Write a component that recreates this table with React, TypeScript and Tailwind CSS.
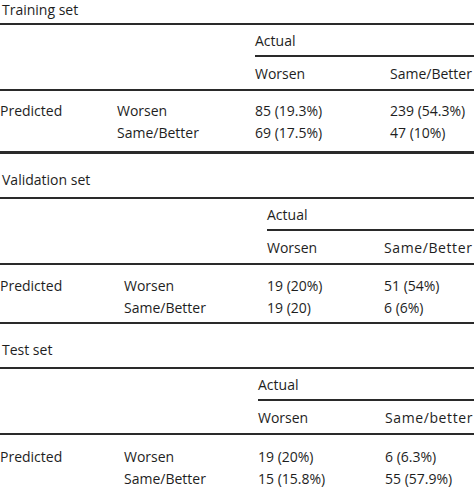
import type { ReactElement } from 'react';

type Section = {
  title: string;
  cols: string;
  titleClass: string;
  dataClass: string;
  bottomClass: string;
  right: string;
  rightClass: string;
  rows: [string, string, string, string][];
};

const sections: Section[] = [
  {
    title: 'Training set',
    cols: 'grid-cols-[117px_138px_135px_1fr]',
    titleClass: 'pt-0 pb-[3px]',
    dataClass: 'pt-[8px] pb-[8px]',
    bottomClass: 'border-b-[3px]',
    right: 'Same/Better',
    rightClass: 'tracking-normal',
    rows: [
      ['Predicted', 'Worsen', '85 (19.3%)', '239 (54.3%)'],
      ['', 'Same/Better', '69 (17.5%)', '47 (10%)'],
    ],
  },
  {
    title: 'Validation set',
    cols: 'grid-cols-[124px_143px_117px_1fr]',
    titleClass: 'pt-[16px] pb-[7px]',
    dataClass: 'pt-[9px] pb-[4px]',
    bottomClass: 'border-b-2',
    right: 'Same/Better',
    rightClass: 'tracking-[0.6px]',
    rows: [
      ['Predicted', 'Worsen', '19 (20%)', '51 (54%)'],
      ['', 'Same/Better', '19 (20)', '6 (6%)'],
    ],
  },
  {
    title: 'Test set',
    cols: 'grid-cols-[124px_134px_127px_1fr]',
    titleClass: 'pt-[16px] pb-[7px]',
    dataClass: 'pt-[10px] pb-[4px]',
    bottomClass: 'border-b-0',
    right: 'Same/better',
    rightClass: 'tracking-[0.6px]',
    rows: [
      ['Predicted', 'Worsen', '19 (20%)', '6 (6.3%)'],
      ['', 'Same/Better', '15 (15.8%)', '55 (57.9%)'],
    ],
  },
];

function SetTable({ s }: { s: Section }): ReactElement {
  return (
    <section>
      <div className={`${s.titleClass} pl-[2px] leading-[20px]`}>{s.title}</div>
      <div className={`border-t-2 border-[#2a2a2a] ${s.bottomClass}`}>
        <div className={`grid ${s.cols}`}>
          <div className="col-span-2" />
          <div className="col-span-2 flex h-[32px] items-center border-b-2 border-[#2a2a2a]">Actual</div>
        </div>
        <div className={`grid ${s.cols} h-[34px] items-center border-b-2 border-[#2a2a2a]`}>
          <div />
          <div />
          <div>Worsen</div>
          <div className={`whitespace-nowrap ${s.rightClass}`}>{s.right}</div>
        </div>
        <div className={s.dataClass}>
          {s.rows.map((r, i) => (
            <div key={i} className={`grid ${s.cols} h-[22px] items-center whitespace-nowrap`}>
              {r.map((c, j) => (
                <div key={j}>{c}</div>
              ))}
            </div>
          ))}
        </div>
      </div>
    </section>
  );
}

export default function App(): ReactElement {
  return (
    <div
      className="h-[487px] w-[474px] overflow-hidden bg-white text-[14px] text-[#1e1e1e]"
      style={{ fontFamily: '"Open Sans", "Noto Sans", sans-serif' }}
    >
      {sections.map((s) => (
        <SetTable key={s.title} s={s} />
      ))}
    </div>
  );
}
